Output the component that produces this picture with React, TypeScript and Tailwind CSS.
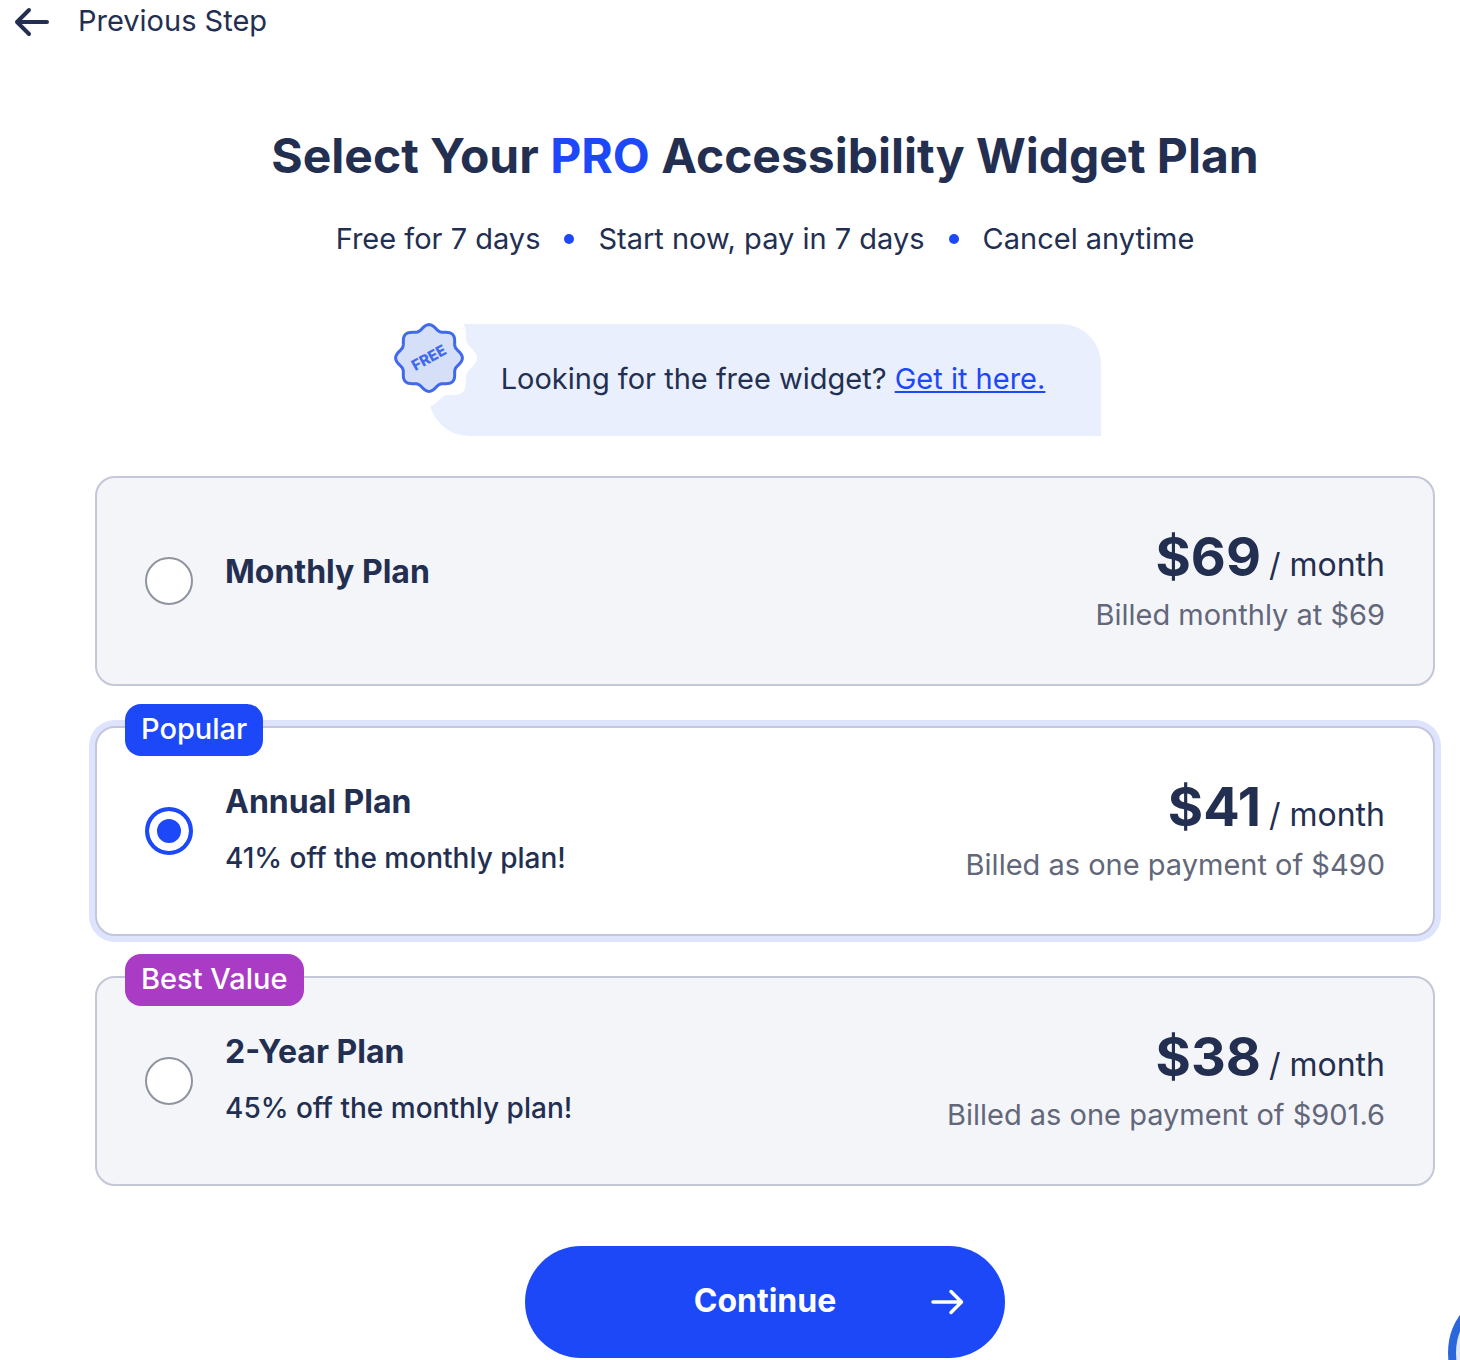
import React, { useState } from 'react';

interface Plan {
  id: string;
  name: string;
  price: string;
  billing: string;
  discount?: string;
  tag?: string;
  tagClass?: string;
}

const plans: Plan[] = [
  { id: 'monthly', name: 'Monthly Plan', price: '$69', billing: 'Billed monthly at $69' },
  {
    id: 'annual',
    name: 'Annual Plan',
    price: '$41',
    billing: 'Billed as one payment of $490',
    discount: '41% off the monthly plan!',
    tag: 'Popular',
    tagClass: 'bg-[#1c48f7]',
  },
  {
    id: 'two-year',
    name: '2-Year Plan',
    price: '$38',
    billing: 'Billed as one payment of $901.6',
    discount: '45% off the monthly plan!',
    tag: 'Best Value',
    tagClass: 'bg-[#a93bc4]',
  },
];

// Eight-pointed seal outline around (50, 50)
function sealPath(radius: number) {
  const points: string[] = [];
  for (let deg = 0; deg < 360; deg += 3) {
    const a = (deg * Math.PI) / 180;
    const r = radius * (0.925 + 0.075 * Math.cos(8 * a));
    points.push(`${(50 + r * Math.cos(a)).toFixed(2)} ${(50 + r * Math.sin(a)).toFixed(2)}`);
  }
  return `M${points.join('L')}Z`;
}

function FreeSeal() {
  return (
    <svg viewBox="0 0 100 100" className="absolute -top-4 -left-[50px] w-[100px] h-[100px]" role="img" aria-label="Free">
      <path d={sealPath(48)} fill="#fff" />
      <path d={sealPath(33.4)} fill="#d5dff8" stroke="#4169ec" strokeWidth="3" strokeLinejoin="round" />
      <text
        x="50"
        y="55"
        textAnchor="middle"
        transform="rotate(-29 50 50)"
        fill="#4169ec"
        className="font-['Inter',sans-serif] text-[15px] font-extrabold"
      >
        FREE
      </text>
    </svg>
  );
}

function PlanCard({ plan, selected, onSelect }: { plan: Plan; selected: boolean; onSelect: () => void }) {
  return (
    <label
      htmlFor={plan.id}
      className={`relative flex items-center justify-between min-h-[210px] px-12 border-2 rounded-[20px] cursor-pointer ${
        selected ? 'bg-white border-[#c3c7d9] ring-6 ring-[#dfe4fe]' : 'bg-[#f4f5f9] border-[#c3c7d6]'
      }`}
    >
      {plan.tag && (
        <span
          className={`absolute -top-6 left-7 h-[52px] px-4 rounded-2xl text-white text-[29px] leading-[50px] font-medium ${plan.tagClass}`}
        >
          {plan.tag}
        </span>
      )}
      <span className="flex items-center gap-8">
        <input
          type="radio"
          id={plan.id}
          name="plan"
          checked={selected}
          onChange={onSelect}
          className="appearance-none shrink-0 w-12 h-12 rounded-full bg-white border-2 border-[#8f939f] checked:border-4 checked:border-[#1c48f7] checked:bg-[#1c48f7] checked:shadow-[inset_0_0_0_8px_#fff]"
        />
        <span className="flex flex-col pb-[2px]">
          <span className="text-[32px] leading-10 font-bold mb-4">{plan.name}</span>
          {plan.discount && <span className="text-[28px] leading-10 font-medium">{plan.discount}</span>}
        </span>
      </span>
      <span className="flex flex-col items-end">
        <span className="flex items-baseline gap-2 mb-2">
          <span className="text-[54px] leading-[60px] font-bold">{plan.price}</span>
          <span className="text-[32px]">/ month</span>
        </span>
        <span className="text-[29px] leading-10 text-[#62677a]">{plan.billing}</span>
      </span>
    </label>
  );
}

export default function App() {
  const [selectedId, setSelectedId] = useState('annual');

  return (
    <div className="bg-white text-[#232f50] font-['Inter',sans-serif] text-[29px] leading-10">
      <header className="pl-3 h-11">
        <button type="button" className="flex items-center gap-6 cursor-pointer">
          <svg viewBox="0 0 42 44" className="w-[42px] h-11" fill="none" stroke="currentColor" strokeWidth="4" strokeLinecap="round" strokeLinejoin="round">
            <path d="M35 22H5M17 10L5 22l12 12" />
          </svg>
          <span className="pb-[2px]">Previous Step</span>
        </button>
      </header>

      <main className="flex flex-col items-center pl-[95px] pr-[25px] pt-[82px]">
        <h1 className="text-[48px] leading-[60px] font-bold text-center">
          Select Your <span className="text-[#1c48f7]">PRO</span> Accessibility Widget Plan
        </h1>

        <ul className="flex items-center gap-6 mt-[33px]">
          <li>Free for 7 days</li>
          <li className="w-[10px] h-[10px] rounded-full bg-[#1c48f7]" aria-hidden="true" />
          <li>Start now, pay in 7 days</li>
          <li className="w-[10px] h-[10px] rounded-full bg-[#1c48f7]" aria-hidden="true" />
          <li>Cancel anytime</li>
        </ul>

        <div className="relative mt-[65px] h-28 w-[672px] flex items-center justify-center pl-4 pb-[2px] bg-[#e9effc] rounded-tr-[40px] rounded-bl-[40px]">
          <FreeSeal />
          <p>
            Looking for the free widget?{' '}
            <a href="#free" className="text-[#1c48f7] underline underline-offset-2 decoration-2">
              Get it here.
            </a>
          </p>
        </div>

        <div className="flex flex-col gap-10 w-full mt-10" role="radiogroup" aria-label="Plans">
          {plans.map((plan) => (
            <PlanCard
              key={plan.id}
              plan={plan}
              selected={plan.id === selectedId}
              onSelect={() => setSelectedId(plan.id)}
            />
          ))}
        </div>

        <button
          type="button"
          className="relative mt-[60px] w-[480px] h-28 pb-[2px] rounded-full bg-[#1c48f7] text-white text-[32px] font-bold cursor-pointer"
        >
          Continue
          <svg viewBox="0 0 40 32" className="absolute right-[38px] top-10 w-10 h-8" fill="none" stroke="currentColor" strokeWidth="3.5" strokeLinecap="round" strokeLinejoin="round">
            <path d="M6 16h28M24 5.500l10.500 10.500L24 26.500" />
          </svg>
        </button>
      </main>

      <button
        type="button"
        aria-label="Open accessibility menu"
        className="fixed -right-[120px] -bottom-[59px] w-[132px] h-[132px] rounded-full border-8 border-[#2b67db] bg-[#dde6fa]"
      />
    </div>
  );
}
